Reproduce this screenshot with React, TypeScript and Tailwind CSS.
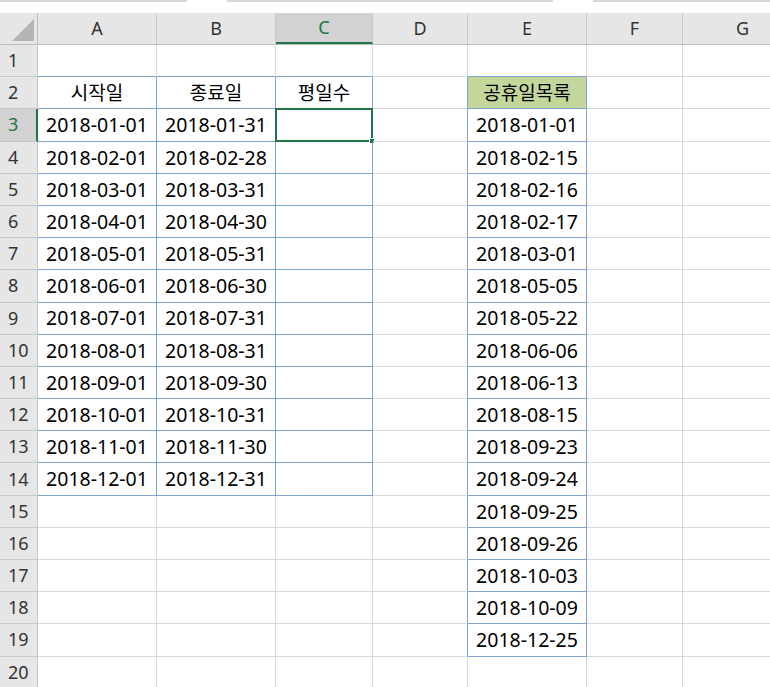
const cols = ["A", "B", "C", "D", "E", "F", "G"];
const widths = [119, 119, 97, 95, 119, 96, 120];

const startDates = Array.from({ length: 12 }, (_, i) => `2018-${String(i + 1).padStart(2, "0")}-01`);
const endDates = ["2018-01-31", "2018-02-28", "2018-03-31", "2018-04-30", "2018-05-31", "2018-06-30", "2018-07-31", "2018-08-31", "2018-09-30", "2018-10-31", "2018-11-30", "2018-12-31"];
const holidays = ["2018-01-01", "2018-02-15", "2018-02-16", "2018-02-17", "2018-03-01", "2018-05-05", "2018-05-22", "2018-06-06", "2018-06-13", "2018-08-15", "2018-09-23", "2018-09-24", "2018-09-25", "2018-09-26", "2018-10-03", "2018-10-09", "2018-12-25"];

const isBlue = (r: number, c: number) =>
  (c >= 0 && c <= 2 && r >= 2 && r <= 14) || (c === 4 && r >= 2 && r <= 19);

const value = (r: number, c: number) => {
  if (r === 2) return ["시작일", "종료일", "평일수", "", "공휴일목록", "", ""][c];
  if (c === 0 && r >= 3 && r <= 14) return startDates[r - 3];
  if (c === 1 && r >= 3 && r <= 14) return endDates[r - 3];
  if (c === 4 && r >= 3 && r <= 19) return holidays[r - 3];
  return "";
};

export default function App() {
  const rows = Array.from({ length: 20 }, (_, i) => i + 1);
  return (
    <div
      className="w-[770px] h-[687px] overflow-hidden bg-white text-black"
      style={{ fontFamily: '"Noto Sans", "Noto Sans CJK KR", sans-serif' }}
    >
      <div className="h-[13px] flex gap-[40px] px-0">
        <div className="w-[190px] h-[2px] bg-[#d6d6d6]" />
        <div className="w-[330px] h-[2px] bg-[#d6d6d6]" />
        <div className="w-[180px] h-[2px] bg-[#d6d6d6]" />
      </div>
      <div className="flex h-[32px] bg-[#e6e6e6] border-b border-[#bdbdbd]">
        <div className="w-[38px] shrink-0 border-r border-[#bdbdbd] relative">
          <div className="absolute right-[3px] bottom-[3px] w-0 h-0 border-l-[22px] border-l-transparent border-b-[22px] border-b-[#b4b4b4]" />
        </div>
        {cols.map((c, i) => (
          <div
            key={c}
            style={{ width: widths[i] }}
            className={`shrink-0 flex items-center justify-center text-[18px] border-r border-[#c8c8c8] ${
              c === "C" ? "bg-[#d2d2d2] text-[#217346] border-b-2 border-b-[#217346]" : "text-[#333]"
            }`}
          >
            {c}
          </div>
        ))}
      </div>
      {rows.map((r) => (
        <div key={r} className="flex h-[32.2px]">
          <div
            className={`w-[38px] shrink-0 flex items-center pl-[8px] text-[18px] border-r border-b border-[#c8c8c8] ${
              r === 3 ? "bg-[#d2d2d2] text-[#217346] border-r-2 border-r-[#217346]" : "bg-[#e6e6e6] text-[#333]"
            }`}
          >
            {r}
          </div>
          {cols.map((_, c) => {
            const rightBlue = isBlue(r, c) || isBlue(r, c + 1);
            const bottomBlue = isBlue(r, c) || isBlue(r + 1, c);
            const header = r === 2 && c === 4;
            const selected = r === 3 && c === 2;
            return (
              <div
                key={c}
                style={{ width: widths[c] }}
                className={`shrink-0 relative flex items-center justify-center whitespace-nowrap ${
                  r === 2 ? "text-[19px]" : "text-[19.5px]"
                } border-r border-b ${rightBlue ? "border-r-[#7fa4d3]" : "border-r-[#d9d9d9]"} ${
                  bottomBlue ? "border-b-[#7fa4d3]" : "border-b-[#d9d9d9]"
                } ${header ? "bg-[#c4d79b]" : ""}`}
              >
                {value(r, c)}
                {selected && (
                  <div className="absolute -left-px -top-px -right-px -bottom-px border-2 border-[#217346]">
                    <div className="absolute -right-[4px] -bottom-[4px] w-[6px] h-[6px] bg-[#217346] border border-white" />
                  </div>
                )}
              </div>
            );
          })}
        </div>
      ))}
    </div>
  );
}
